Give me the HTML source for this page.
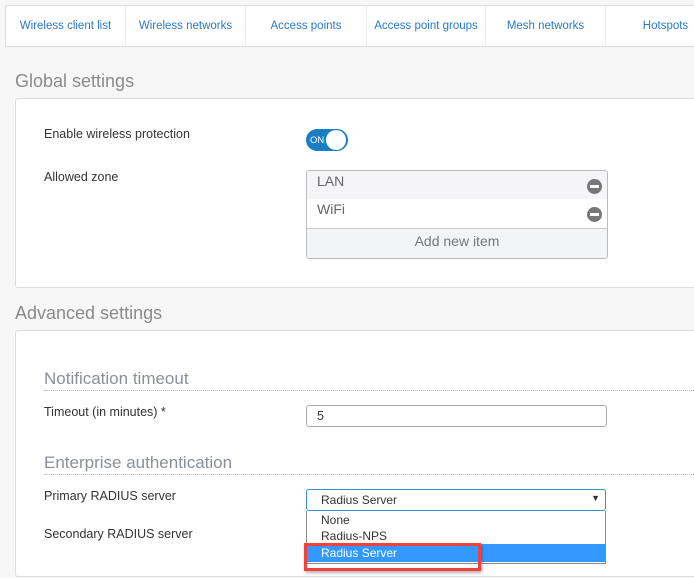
<!DOCTYPE html>
<html><head><style>
*{box-sizing:border-box;margin:0;padding:0}
body{width:694px;height:578px;overflow:hidden;background:#f7f7f7;font-family:"Liberation Sans",sans-serif;position:relative;color:#333}
.a{position:absolute}
.tabs{left:5px;top:5px;width:700px;height:42px;background:#fff;border:1px solid #ddd}
.tab{top:0;height:40px;line-height:40px;font-size:11.5px;color:#2a7ac4;text-align:center;border-right:1px solid #eee}
.h{font-size:18px;color:#8a8a8a;font-weight:300}
.panel{background:#fff;border:1px solid #ddd;border-radius:3px}
.lbl{font-size:12.5px;color:#333}
.sub{font-size:17px;color:#8a8f98;border-bottom:1px dotted #bbb;width:660px;height:22px}
.minus{width:15px;height:15px;border-radius:50%;background:#777;}
.minus:after{content:"";position:absolute;left:3px;top:6px;width:9px;height:3px;background:#fff}
</style></head><body>
<div class="a tabs">
<div class="a tab" style="left:0;width:120px">Wireless client list</div>
<div class="a tab" style="left:120px;width:120px">Wireless networks</div>
<div class="a tab" style="left:240px;width:121px">Access points</div>
<div class="a tab" style="left:361px;width:119px">Access point groups</div>
<div class="a tab" style="left:480px;width:120px">Mesh networks</div>
<div class="a tab" style="left:600px;width:120px">Hotspots</div>
</div>
<div class="a h" style="left:15px;top:71px">Global settings</div>
<div class="a panel" style="left:15px;top:98px;width:690px;height:190px"></div>
<div class="a lbl" style="left:44px;top:127px">Enable wireless protection</div>
<div class="a" style="left:306px;top:129px;width:42px;height:22px;border-radius:11px;background:#1a7ec7">
<span class="a" style="left:4px;top:6px;font-size:9.5px;color:#fff">ON</span>
<div class="a" style="left:20px;top:1px;width:20px;height:20px;border-radius:50%;background:#fff"></div></div>
<div class="a lbl" style="left:44px;top:170px">Allowed zone</div>
<div class="a" style="left:306px;top:170px;width:302px;height:89px;border:1px solid #bbb;border-radius:3px;overflow:hidden;background:#fff">
<div class="a" style="left:0;top:0;width:300px;height:28px;background:#f5f5f7"></div>
<div class="a" style="left:10px;top:2px;font-size:14px;color:#666">LAN</div>
<div class="a minus" style="left:280px;top:8px"></div>
<div class="a" style="left:10px;top:30px;font-size:14px;color:#666">WiFi</div>
<div class="a minus" style="left:280px;top:36px"></div>
<div class="a" style="left:0;top:57px;width:300px;height:31px;background:#f3f4f6;border-top:1px solid #ccc;text-align:center;line-height:24px;font-size:14px;color:#777">Add new item</div>
</div>
<div class="a h" style="left:15px;top:303px">Advanced settings</div>
<div class="a panel" style="left:15px;top:330px;width:690px;height:247px"></div>
<div class="a sub" style="left:44px;top:369px">Notification timeout</div>
<div class="a lbl" style="left:44px;top:405px">Timeout (in minutes) *</div>
<div class="a" style="left:306px;top:405px;width:301px;height:22px;border:1px solid #aaa;border-radius:3px;background:#fff;font-size:12.5px;padding:3px 10px">5</div>
<div class="a sub" style="left:44px;top:453px">Enterprise authentication</div>
<div class="a lbl" style="left:44px;top:489px">Primary RADIUS server</div>
<div class="a lbl" style="left:44px;top:527px">Secondary RADIUS server</div>
<div class="a" style="left:306px;top:489px;width:300px;height:22px;border:1px solid #3d8dc9;border-radius:3px;background:#fff;font-size:12px;padding:3px 14px">Radius Server<span class="a" style="right:5px;top:3px;font-size:9px">▼</span></div>
<div class="a" style="left:306px;top:511px;width:300px;height:53px;border:1px solid #888;border-top:none;background:#fff;font-size:12px">
<div style="padding:2px 14px 0;height:16px">None</div>
<div style="padding:2px 14px 0;height:17px">Radius-NPS</div>
<div style="padding:2px 14px 0;height:18px;background:#3399ff;color:#fff">Radius Server</div>
</div>
<div class="a" style="left:304px;top:543px;width:177px;height:28px;border:3px solid #f24040;box-shadow:1px 2px 3px rgba(0,0,0,.3)"></div>
</body></html>
